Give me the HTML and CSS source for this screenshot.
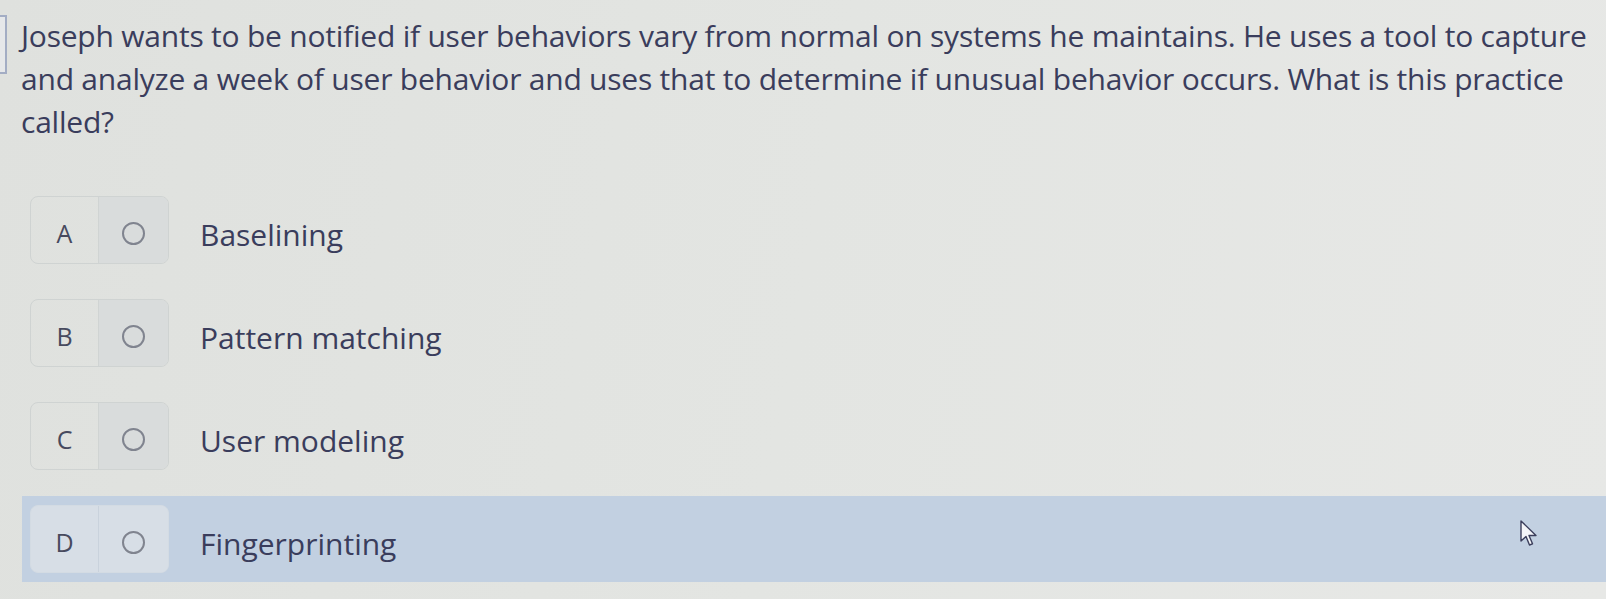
FILE: index.html
```html
<!DOCTYPE html>
<html>
<head>
<meta charset="utf-8">
<link rel="stylesheet" href="styles.css">
</head>
<body>
<div class="page">
  <div class="edge-mark"></div>
  <p class="question">Joseph wants to be notified if user behaviors vary from normal on systems he maintains. He uses a tool to capture and analyze a week of user behavior and uses that to determine if unusual behavior occurs. What is this practice called?</p>
  <div class="options">
    <div class="option">
      <div class="choice"><span class="letter">A</span><span class="radio-cell"><span class="radio"></span></span></div>
      <span class="label">Baselining</span>
    </div>
    <div class="option">
      <div class="choice"><span class="letter">B</span><span class="radio-cell"><span class="radio"></span></span></div>
      <span class="label">Pattern matching</span>
    </div>
    <div class="option">
      <div class="choice"><span class="letter">C</span><span class="radio-cell"><span class="radio"></span></span></div>
      <span class="label">User modeling</span>
    </div>
    <div class="option hover">
      <div class="choice"><span class="letter">D</span><span class="radio-cell"><span class="radio"></span></span></div>
      <span class="label">Fingerprinting</span>
      <svg class="cursor" width="18" height="28" viewBox="0 0 18 28"><path d="M1 1 L1 21 L6 16.5 L9.5 25 L12.5 23.8 L9 15.5 L16 15.5 Z" fill="#f4f5f8" stroke="#3c3f5c" stroke-width="1.4" stroke-linejoin="round"/></svg>
    </div>
  </div>
</div>
</body>
</html>
```
FILE: styles.css
```css
html, body {
  margin: 0;
  padding: 0;
}
body {
  background: linear-gradient(100deg, #dfe1de 0%, #e3e5e2 50%, #e7e8e6 100%);
  font-family: "Open Sans", "Noto Sans", sans-serif;
  color: #3a3d5c;
  width: 1606px;
  height: 599px;
  overflow: hidden;
}
.page {
  position: relative;
  padding: 14px 0 0 0;
}
.edge-mark {
  position: absolute;
  left: -2px;
  top: 15px;
  width: 5px;
  height: 55px;
  border: 2px solid #a3adc4;
  background: #e6e8ea;
}
.question {
  margin: 0;
  padding: 0 0 0 21px;
  font-size: 30px;
  line-height: 43px;
  letter-spacing: -0.22px;
}
.options {
  display: flex;
  flex-direction: column;
  gap: 17px;
  margin-top: 44px;
}
.option {
  position: relative;
  display: flex;
  align-items: center;
  height: 68px;
  padding: 9px 0 9px 8px;
  margin-left: 22px;
}
.option.hover {
  background: #c2d0e1;
}
.choice {
  display: flex;
  width: 139px;
  height: 68px;
  border: 1.5px solid #cfd3d2;
  border-radius: 8px;
  overflow: hidden;
  box-sizing: border-box;
}
.option.hover .choice {
  border-color: #d3dbe3;
  background: #d7dee6;
}
.letter {
  width: 68px;
  display: flex;
  align-items: center;
  justify-content: center;
  padding-top: 6px;
  box-sizing: border-box;
  font-size: 25px;
  color: #474a5e;
  border-right: 1.5px solid #d0d4d3;
}
.radio-cell {
  flex: 1;
  display: flex;
  align-items: center;
  justify-content: center;
  padding-top: 6px;
  background: #d9dcdc;
}
.option.hover .radio-cell {
  background: #d7dee6;
}
.option.hover .letter {
  border-right-color: #c9d2dc;
}
.radio {
  width: 19px;
  height: 19px;
  border: 2px solid #80848f;
  border-radius: 50%;
}
.label {
  margin-left: 31px;
  font-size: 30px;
  color: #3a3d5c;
  padding-top: 8px;
}
.cursor {
  position: absolute;
  left: 1498px;
  top: 24px;
}
```
